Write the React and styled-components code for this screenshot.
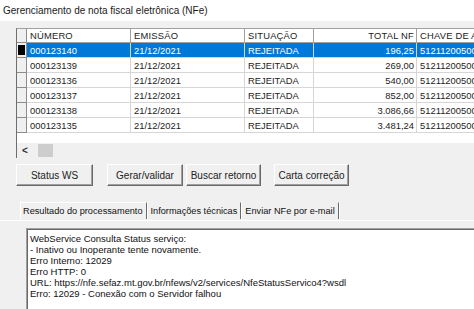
// Tela de gerenciamento de NFe - recriação do form estilo Windows

import React from "react";
import styled, { createGlobalStyle } from "styled-components";

// ==== GLOBAL ====
const GlobalStyle = createGlobalStyle`
  html, body { margin: 0; padding: 0; background: #f0f0f0; }
  body { font-family: "Liberation Sans", Arial, sans-serif; color: #000; }
`;

// ==== CSS STYLING ====
const Window = styled.div`
  width: 474px;
  height: 309px;
  overflow: hidden;
  background: #f0f0f0;
`;

const TitleBar = styled.div`
  height: 21px;
  line-height: 21px;
  background: #fff;
  padding-left: 3px;
  font-size: 10px;
  color: #1a1a1a;
  white-space: nowrap;
`;

const GridBox = styled.div`
  margin: 7px 0 0 16px;
  width: 520px;
  height: 130px;
  background: #fff;
  border-left: 1px solid #6e6e6e;
  border-top: 1px solid #a0a0a0;
  display: flex;
  flex-direction: column;
  box-sizing: border-box;
`;

const Rows = styled.div`
  flex: 1;
`;

const Row = styled.div`
  display: grid;
  grid-template-columns: 10px 104px 114px 69px 103px 120px;
  height: ${(p) => (p.$header ? 14 : 15)}px;
  font-size: 9.4px;
  background: ${(p) => (p.$selected ? "#0078d7" : "#fff")};
  color: ${(p) => (p.$selected ? "#fff" : "#222")};
`;

const Indicator = styled.div`
  background: #f0f0f0;
  border-right: 1px solid #8c8c8c;
  border-bottom: 1px solid #8c8c8c;
  display: flex;
  align-items: center;
  justify-content: center;
  &::after {
    content: "";
    display: ${(p) => (p.$active ? "block" : "none")};
    width: 7px;
    height: 10px;
    background: #000;
  }
`;

const Cell = styled.div`
  border-right: 1px solid ${(p) => (p.$header ? "#a0a0a0" : "#d6d6d6")};
  border-bottom: 1px solid ${(p) => (p.$header ? "#a0a0a0" : "#d6d6d6")};
  padding: 0 ${(p) => (p.$right ? "2px" : "0")} 0 ${(p) => (p.$right ? "0" : "3px")};
  text-align: ${(p) => (p.$right ? "right" : "left")};
  line-height: ${(p) => (p.$header ? 14 : 15)}px;
  white-space: nowrap;
  overflow: hidden;
  letter-spacing: ${(p) => (p.$header ? "0.2px" : "0")};
`;

const HScroll = styled.div`
  height: 15px;
  background: #f0f0f0;
  display: flex;
  align-items: center;
  gap: 5px;
  padding-left: 5px;
`;

const Arrow = styled.span`
  font-size: 10px;
  color: #333;
  font-weight: bold;
  width: 11px;
`;

const Thumb = styled.div`
  width: 15px;
  height: 13px;
  background: #cdcdcd;
`;

const ButtonRow = styled.div`
  display: flex;
  margin: 6px 0 0 16px;
`;

const Button = styled.button`
  width: ${(p) => p.$w}px;
  height: 22px;
  margin-left: ${(p) => p.$gap || 0}px;
  padding: 0;
  font-family: "Liberation Sans", Arial, sans-serif;
  font-size: 10px;
  color: #222;
  background: #f0f0f0;
  border-style: solid;
  border-width: 1px;
  border-color: #fff #6a6a6a #6a6a6a #fff;
  box-shadow: inset -1px -1px 0 #a0a0a0;
`;

const TabStrip = styled.div`
  display: flex;
  margin: 16px 0 0 20px;
  height: 17px;
  align-items: stretch;
`;

const Tab = styled.div`
  font-size: 9.2px;
  line-height: 16px;
  padding: 0 3px 0 2px;
  white-space: nowrap;
  color: #111;
  border-right: 1px solid #6a6a6a;
  box-shadow: 1px 0 0 #fff;
  margin-right: 1px;
  border-top: ${(p) => (p.$active ? "1px solid #fff" : "1px solid transparent")};
  border-left: ${(p) => (p.$active ? "1px solid #fff" : "1px solid transparent")};
`;

const TabPage = styled.div`
  border-top: 1px solid #fff;
  padding: 7px 0 0 26px;
  margin-top: 1px;
`;

const Memo = styled.div`
  height: 100px;
  background: #fff;
  border-top: 1px solid #a0a0a0;
  border-left: 1px solid #a0a0a0;
  box-shadow: inset 1px 1px 0 #696969;
  padding: 4px 0 0 3px;
  font-size: 9.5px;
  line-height: 11px;
  color: #111;
  white-space: nowrap;
`;

// ==== DATA ====
const notas = [
  { num: "000123140", data: "21/12/2021", total: "196,25" },
  { num: "000123139", data: "21/12/2021", total: "269,00" },
  { num: "000123136", data: "21/12/2021", total: "540,00" },
  { num: "000123137", data: "21/12/2021", total: "852,00" },
  { num: "000123138", data: "21/12/2021", total: "3.086,66" },
  { num: "000123135", data: "21/12/2021", total: "3.481,24" },
];

const log = [
  "WebService Consulta Status serviço:",
  "- Inativo ou Inoperante tente novamente.",
  "Erro Interno: 12029",
  "Erro HTTP: 0",
  "URL: https://nfe.sefaz.mt.gov.br/nfews/v2/services/NfeStatusServico4?wsdl",
  "Erro: 12029 - Conexão com o Servidor falhou",
];

// ==== APP ====
function App() {
  return (
    <>
      <GlobalStyle />
      <Window>
        <TitleBar>Gerenciamento de nota fiscal eletrônica (NFe)</TitleBar>

        <GridBox>
          <Rows>
            <Row $header>
              <Indicator />
              <Cell $header>NÚMERO</Cell>
              <Cell $header>EMISSÃO</Cell>
              <Cell $header>SITUAÇÃO</Cell>
              <Cell $header $right>TOTAL NF</Cell>
              <Cell $header>CHAVE DE ACESSO</Cell>
            </Row>
            {notas.map((n, i) => (
              <Row key={n.num} $selected={i === 0}>
                <Indicator $active={i === 0} />
                <Cell>{n.num}</Cell>
                <Cell>{n.data}</Cell>
                <Cell>REJEITADA</Cell>
                <Cell $right>{n.total}</Cell>
                <Cell>51211200500000000000</Cell>
              </Row>
            ))}
          </Rows>
          <HScroll>
            <Arrow>&lt;</Arrow>
            <Thumb />
          </HScroll>
        </GridBox>

        <ButtonRow>
          <Button $w={77}>Status WS</Button>
          <Button $w={76} $gap={14}>Gerar/validar</Button>
          <Button $w={75} $gap={3}>Buscar retorno</Button>
          <Button $w={75} $gap={13}>Carta correção</Button>
        </ButtonRow>

        <TabStrip>
          <Tab $active>Resultado do processamento</Tab>
          <Tab>Informações técnicas</Tab>
          <Tab>Enviar NFe por e-mail</Tab>
        </TabStrip>

        <TabPage>
          <Memo>
            {log.map((l) => (
              <div key={l}>{l}</div>
            ))}
          </Memo>
        </TabPage>
      </Window>
    </>
  );
}

export default App;
